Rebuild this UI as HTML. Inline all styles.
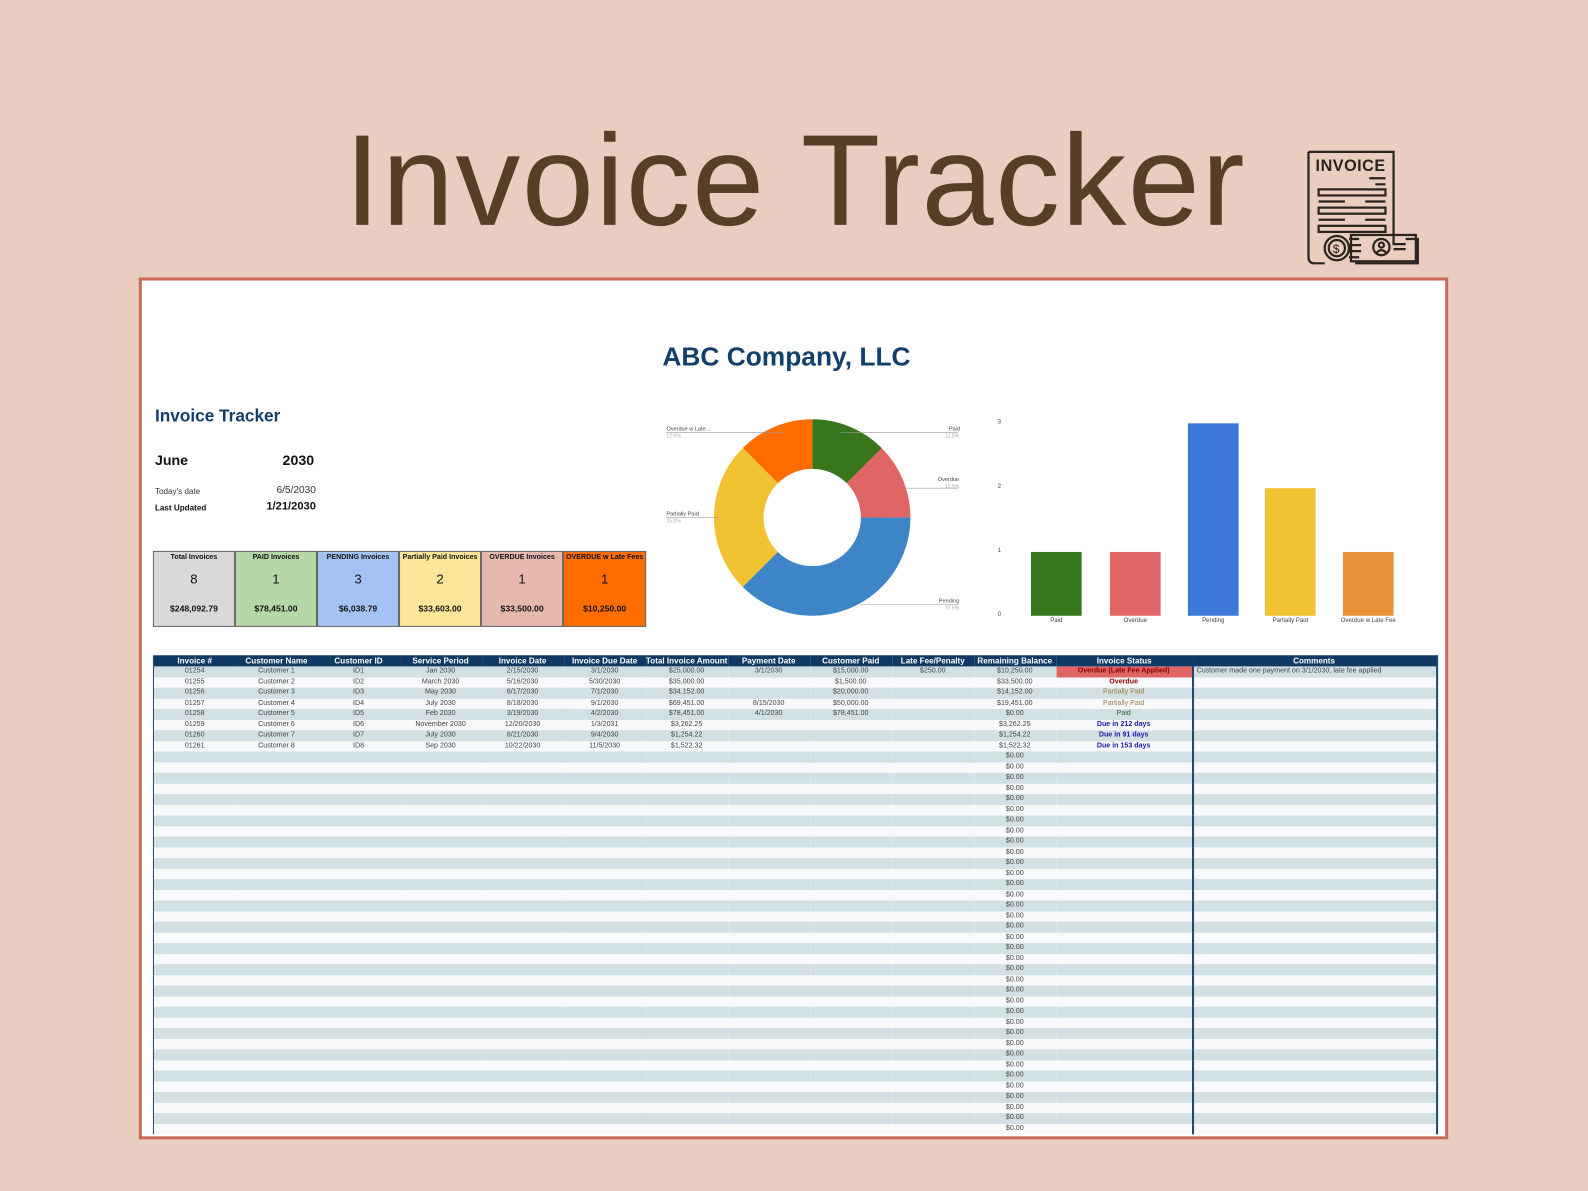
<!DOCTYPE html>
<html><head><meta charset="utf-8"><style>
*{margin:0;padding:0;box-sizing:border-box}
html,body{width:1588px;height:1191px;overflow:hidden;background:#e8cdc0;font-family:"Liberation Sans",Arial,sans-serif}
#s{position:absolute;left:0;top:0;width:1568px;height:1176px;transform:scale(1.01276);transform-origin:0 0}
.abs{position:absolute}
#title{left:340px;top:114px;font-size:128px;line-height:130px;color:#573f27;letter-spacing:1.5px;white-space:nowrap}
#frame{left:137px;top:274px;width:1293px;height:851px;border:3px solid #c96a55;background:#fff;overflow:hidden}
.box{position:absolute;top:544px;width:81px;height:75px;border:1px solid #666;text-align:center;color:#111}
.box .h{font-size:7px;font-weight:bold;margin-top:2px;white-space:nowrap}
.box .n{font-size:13px;margin-top:10px}
.box .v{font-size:8.5px;font-weight:bold;margin-top:17px}
table{position:absolute;left:151px;top:647px;width:1267px;border-collapse:collapse;table-layout:fixed;font-size:7px;color:#444}
th{background:#103a64;color:#fff;font-size:8px;height:11px;font-weight:bold;text-align:center;white-space:nowrap}
td{height:10.5px;text-align:center;white-space:nowrap;overflow:hidden;line-height:10px;padding:0}
tr:nth-child(even) td{background:#d2e0e3}
tr:nth-child(odd) td{background:#f7f9fb}
td.c{border-left:2px solid #1d4771;text-align:left;padding-left:3px}
table{border-left:1px solid #1d4771;border-right:2px solid #1d4771}
.ax{font-size:6px;color:#444}
</style></head><body><div id="s">
<div id="title" class="abs">Invoice Tracker</div>
<svg class="abs" style="left:1288px;top:146px" width="116" height="116" viewBox="0 0 116 116" fill="none" stroke="#2a2420" stroke-width="2.2">
<path d="M4 4 H88 V96 M4 4 V108 Q4 114 10 114 H20"/>
<text x="11" y="23" font-family="Liberation Sans" font-size="16" font-weight="bold" fill="#2a2420" stroke="none" letter-spacing="0.5">INVOICE</text>
<path d="M64 30H80 M70 36H80"/>
<rect x="14" y="41" width="66" height="6"/><path d="M14 53H40 M60 53H80"/>
<rect x="14" y="59" width="66" height="6"/><path d="M14 71H40 M60 71H80"/>
<rect x="14" y="77" width="66" height="6"/>
<rect x="46" y="86" width="64" height="26"/>
<path d="M100 90H112V114H50"/>
<circle cx="32" cy="99" r="12"/><circle cx="32" cy="99" r="8"/>
<text x="28" y="104" font-family="Liberation Sans" font-size="12" fill="#2a2420" stroke="none">$</text>
<path d="M44 90H54 M44 96H56 M44 102H56 M44 108H54"/>
<circle cx="76" cy="98" r="8"/><circle cx="76" cy="96" r="2.5"/><path d="M71 104Q76 98 81 104"/>
<path d="M88 95H100 M88 100H100"/>
</svg>
<div id="frame" class="abs"></div>
<div class="abs" style="left:654px;top:337px;font-size:26px;font-weight:bold;color:#123f6b">ABC Company, LLC</div>
<div class="abs" style="left:153px;top:401px;font-size:17px;font-weight:bold;color:#123f6b">Invoice Tracker</div>
<div class="abs" style="left:153px;top:446px;font-size:14px;font-weight:bold;color:#111">June</div>
<div class="abs" style="left:279px;top:446px;font-size:14px;font-weight:bold;color:#111">2030</div>
<div class="abs" style="left:153px;top:481px;font-size:8px;color:#333">Today's date</div>
<div class="abs" style="left:273px;top:479px;font-size:10px;color:#333">6/5/2030</div>
<div class="abs" style="left:153px;top:497px;font-size:8px;font-weight:bold;color:#111">Last Updated</div>
<div class="abs" style="left:263px;top:494px;font-size:11px;font-weight:bold;color:#111">1/21/2030</div>

<div class="box" style="left:151px;background:#d9d9d9"><div class="h">Total Invoices</div><div class="n">8</div><div class="v">$248,092.79</div></div>
<div class="box" style="left:232px;background:#b6d7a8"><div class="h">PAID Invoices</div><div class="n">1</div><div class="v">$78,451.00</div></div>
<div class="box" style="left:313px;background:#a4c2f4"><div class="h">PENDING Invoices</div><div class="n">3</div><div class="v">$6,038.79</div></div>
<div class="box" style="left:394px;background:#ffe599"><div class="h">Partially Paid Invoices</div><div class="n">2</div><div class="v">$33,603.00</div></div>
<div class="box" style="left:475px;background:#e6b8af"><div class="h">OVERDUE Invoices</div><div class="n">1</div><div class="v">$33,500.00</div></div>
<div class="box" style="left:556px;width:82px;background:#ff6d01"><div class="h">OVERDUE w Late Fees</div><div class="n">1</div><div class="v">$10,250.00</div></div>

<svg class="abs" style="left:650px;top:405px" width="310" height="215">
<g transform="translate(152,106) rotate(-90)" fill="none" stroke-width="49">
<circle r="72.5" stroke="#38761d" stroke-dasharray="56.94 500"/>
<circle r="72.5" stroke="#e06666" stroke-dasharray="0 56.94 56.94 500"/>
<circle r="72.5" stroke="#3d85c6" stroke-dasharray="0 113.88 170.82 500"/>
<circle r="72.5" stroke="#f1c232" stroke-dasharray="0 284.7 113.88 500"/>
<circle r="72.5" stroke="#ff6d01" stroke-dasharray="0 398.58 56.94 500"/>
</g>
<g stroke="#999" stroke-width="0.6"><path d="M8 22H125 M180 22H296 M245 77H296 M8 106H60 M200 192H296"/></g>
<g font-size="5.5" fill="#444"><text x="8" y="20">Overdue w Late...</text><text x="287" y="20">Paid</text><text x="276" y="70">Overdue</text><text x="8" y="104">Partially Paid</text><text x="277" y="190">Pending</text></g>
<g font-size="5" fill="#aaa"><text x="8" y="27">12.5%</text><text x="283" y="27">12.5%</text><text x="283" y="77">12.5%</text><text x="8" y="111">25.0%</text><text x="283" y="197">37.5%</text></g>
</svg>

<div class="abs ax" style="left:985px;top:414px">3</div>
<div class="abs ax" style="left:985px;top:478px">2</div>
<div class="abs ax" style="left:985px;top:541px">1</div>
<div class="abs ax" style="left:985px;top:604px">0</div>
<div class="abs" style="left:1018px;top:545px;width:50px;height:63px;background:#38761d"></div>
<div class="abs" style="left:1096px;top:545px;width:50px;height:63px;background:#e06666"></div>
<div class="abs" style="left:1173px;top:418px;width:50px;height:190px;background:#3c78d8"></div>
<div class="abs" style="left:1249px;top:482px;width:50px;height:126px;background:#f1c232"></div>
<div class="abs" style="left:1326px;top:545px;width:50px;height:63px;background:#e69138"></div>
<div class="abs ax" style="left:1018px;top:610px;width:50px;text-align:center">Paid</div>
<div class="abs ax" style="left:1096px;top:610px;width:50px;text-align:center">Overdue</div>
<div class="abs ax" style="left:1173px;top:610px;width:50px;text-align:center">Pending</div>
<div class="abs ax" style="left:1249px;top:610px;width:50px;text-align:center">Partially Paid</div>
<div class="abs ax" style="left:1316px;top:610px;width:70px;text-align:center">Overdue w Late Fee</div>

<div class="abs" style="left:140px;top:640px;width:1287px;height:483px;overflow:hidden">
<table style="left:11px;top:7px">
<colgroup><col span="11" style="width:81px"><col style="width:135px"><col style="width:241px"></colgroup>
<tr><th>Invoice #</th><th>Customer Name</th><th>Customer ID</th><th>Service Period</th><th>Invoice Date</th><th>Invoice Due Date</th><th>Total Invoice Amount</th><th>Payment Date</th><th>Customer Paid</th><th>Late Fee/Penalty</th><th>Remaining Balance</th><th>Invoice Status</th><th>Comments</th></tr>
<tr><td>01254</td><td>Customer 1</td><td>ID1</td><td>Jan 2030</td><td>2/15/2030</td><td>3/1/2030</td><td>$25,000.00</td><td>3/1/2030</td><td>$15,000.00</td><td>$250.00</td><td>$10,250.00</td><td style="background:#e06666;color:#8b0000;font-weight:bold">Overdue (Late Fee Applied)</td><td class="c">Customer made one payment on 3/1/2030, late fee applied</td></tr>
<tr><td>01255</td><td>Customer 2</td><td>ID2</td><td>March 2030</td><td>5/16/2030</td><td>5/30/2030</td><td>$35,000.00</td><td></td><td>$1,500.00</td><td></td><td>$33,500.00</td><td style="color:#9a0000;font-weight:bold">Overdue</td><td class="c"></td></tr>
<tr><td>01256</td><td>Customer 3</td><td>ID3</td><td>May 2030</td><td>6/17/2030</td><td>7/1/2030</td><td>$34,152.00</td><td></td><td>$20,000.00</td><td></td><td>$14,152.00</td><td style="color:#9a8040">Partially Paid</td><td class="c"></td></tr>
<tr><td>01257</td><td>Customer 4</td><td>ID4</td><td>July 2030</td><td>8/18/2030</td><td>9/1/2030</td><td>$69,451.00</td><td>8/15/2030</td><td>$50,000.00</td><td></td><td>$19,451.00</td><td style="color:#9a8040">Partially Paid</td><td class="c"></td></tr>
<tr><td>01258</td><td>Customer 5</td><td>ID5</td><td>Feb 2030</td><td>3/19/2030</td><td>4/2/2030</td><td>$78,451.00</td><td>4/1/2030</td><td>$78,451.00</td><td></td><td>$0.00</td><td style="color:#2d5a3a">Paid</td><td class="c"></td></tr>
<tr><td>01259</td><td>Customer 6</td><td>ID6</td><td>November 2030</td><td>12/20/2030</td><td>1/3/2031</td><td>$3,262.25</td><td></td><td></td><td></td><td>$3,262.25</td><td style="color:#1a1aa8;font-weight:bold">Due in 212 days</td><td class="c"></td></tr>
<tr><td>01260</td><td>Customer 7</td><td>ID7</td><td>July 2030</td><td>8/21/2030</td><td>9/4/2030</td><td>$1,254.22</td><td></td><td></td><td></td><td>$1,254.22</td><td style="color:#1a1aa8;font-weight:bold">Due in 91 days</td><td class="c"></td></tr>
<tr><td>01261</td><td>Customer 8</td><td>ID8</td><td>Sep 2030</td><td>10/22/2030</td><td>11/5/2030</td><td>$1,522.32</td><td></td><td></td><td></td><td>$1,522.32</td><td style="color:#1a1aa8;font-weight:bold">Due in 153 days</td><td class="c"></td></tr>
<tr><td></td><td></td><td></td><td></td><td></td><td></td><td></td><td></td><td></td><td></td><td>$0.00</td><td></td><td class="c"></td></tr>
<tr><td></td><td></td><td></td><td></td><td></td><td></td><td></td><td></td><td></td><td></td><td>$0.00</td><td></td><td class="c"></td></tr>
<tr><td></td><td></td><td></td><td></td><td></td><td></td><td></td><td></td><td></td><td></td><td>$0.00</td><td></td><td class="c"></td></tr>
<tr><td></td><td></td><td></td><td></td><td></td><td></td><td></td><td></td><td></td><td></td><td>$0.00</td><td></td><td class="c"></td></tr>
<tr><td></td><td></td><td></td><td></td><td></td><td></td><td></td><td></td><td></td><td></td><td>$0.00</td><td></td><td class="c"></td></tr>
<tr><td></td><td></td><td></td><td></td><td></td><td></td><td></td><td></td><td></td><td></td><td>$0.00</td><td></td><td class="c"></td></tr>
<tr><td></td><td></td><td></td><td></td><td></td><td></td><td></td><td></td><td></td><td></td><td>$0.00</td><td></td><td class="c"></td></tr>
<tr><td></td><td></td><td></td><td></td><td></td><td></td><td></td><td></td><td></td><td></td><td>$0.00</td><td></td><td class="c"></td></tr>
<tr><td></td><td></td><td></td><td></td><td></td><td></td><td></td><td></td><td></td><td></td><td>$0.00</td><td></td><td class="c"></td></tr>
<tr><td></td><td></td><td></td><td></td><td></td><td></td><td></td><td></td><td></td><td></td><td>$0.00</td><td></td><td class="c"></td></tr>
<tr><td></td><td></td><td></td><td></td><td></td><td></td><td></td><td></td><td></td><td></td><td>$0.00</td><td></td><td class="c"></td></tr>
<tr><td></td><td></td><td></td><td></td><td></td><td></td><td></td><td></td><td></td><td></td><td>$0.00</td><td></td><td class="c"></td></tr>
<tr><td></td><td></td><td></td><td></td><td></td><td></td><td></td><td></td><td></td><td></td><td>$0.00</td><td></td><td class="c"></td></tr>
<tr><td></td><td></td><td></td><td></td><td></td><td></td><td></td><td></td><td></td><td></td><td>$0.00</td><td></td><td class="c"></td></tr>
<tr><td></td><td></td><td></td><td></td><td></td><td></td><td></td><td></td><td></td><td></td><td>$0.00</td><td></td><td class="c"></td></tr>
<tr><td></td><td></td><td></td><td></td><td></td><td></td><td></td><td></td><td></td><td></td><td>$0.00</td><td></td><td class="c"></td></tr>
<tr><td></td><td></td><td></td><td></td><td></td><td></td><td></td><td></td><td></td><td></td><td>$0.00</td><td></td><td class="c"></td></tr>
<tr><td></td><td></td><td></td><td></td><td></td><td></td><td></td><td></td><td></td><td></td><td>$0.00</td><td></td><td class="c"></td></tr>
<tr><td></td><td></td><td></td><td></td><td></td><td></td><td></td><td></td><td></td><td></td><td>$0.00</td><td></td><td class="c"></td></tr>
<tr><td></td><td></td><td></td><td></td><td></td><td></td><td></td><td></td><td></td><td></td><td>$0.00</td><td></td><td class="c"></td></tr>
<tr><td></td><td></td><td></td><td></td><td></td><td></td><td></td><td></td><td></td><td></td><td>$0.00</td><td></td><td class="c"></td></tr>
<tr><td></td><td></td><td></td><td></td><td></td><td></td><td></td><td></td><td></td><td></td><td>$0.00</td><td></td><td class="c"></td></tr>
<tr><td></td><td></td><td></td><td></td><td></td><td></td><td></td><td></td><td></td><td></td><td>$0.00</td><td></td><td class="c"></td></tr>
<tr><td></td><td></td><td></td><td></td><td></td><td></td><td></td><td></td><td></td><td></td><td>$0.00</td><td></td><td class="c"></td></tr>
<tr><td></td><td></td><td></td><td></td><td></td><td></td><td></td><td></td><td></td><td></td><td>$0.00</td><td></td><td class="c"></td></tr>
<tr><td></td><td></td><td></td><td></td><td></td><td></td><td></td><td></td><td></td><td></td><td>$0.00</td><td></td><td class="c"></td></tr>
<tr><td></td><td></td><td></td><td></td><td></td><td></td><td></td><td></td><td></td><td></td><td>$0.00</td><td></td><td class="c"></td></tr>
<tr><td></td><td></td><td></td><td></td><td></td><td></td><td></td><td></td><td></td><td></td><td>$0.00</td><td></td><td class="c"></td></tr>
<tr><td></td><td></td><td></td><td></td><td></td><td></td><td></td><td></td><td></td><td></td><td>$0.00</td><td></td><td class="c"></td></tr>
<tr><td></td><td></td><td></td><td></td><td></td><td></td><td></td><td></td><td></td><td></td><td>$0.00</td><td></td><td class="c"></td></tr>
<tr><td></td><td></td><td></td><td></td><td></td><td></td><td></td><td></td><td></td><td></td><td>$0.00</td><td></td><td class="c"></td></tr>
<tr><td></td><td></td><td></td><td></td><td></td><td></td><td></td><td></td><td></td><td></td><td>$0.00</td><td></td><td class="c"></td></tr>
<tr><td></td><td></td><td></td><td></td><td></td><td></td><td></td><td></td><td></td><td></td><td>$0.00</td><td></td><td class="c"></td></tr>
<tr><td></td><td></td><td></td><td></td><td></td><td></td><td></td><td></td><td></td><td></td><td>$0.00</td><td></td><td class="c"></td></tr>
<tr><td></td><td></td><td></td><td></td><td></td><td></td><td></td><td></td><td></td><td></td><td>$0.00</td><td></td><td class="c"></td></tr>
<tr><td></td><td></td><td></td><td></td><td></td><td></td><td></td><td></td><td></td><td></td><td>$0.00</td><td></td><td class="c"></td></tr>
</table>
</div>
</div></body></html>
